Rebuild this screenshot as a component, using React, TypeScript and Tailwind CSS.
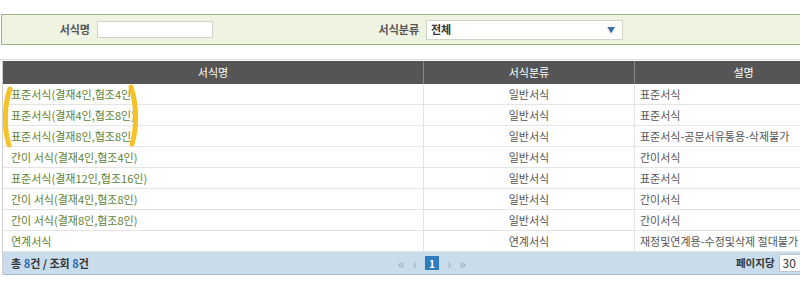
const rows = [
  {name: '표준서식(결재4인,협조4인)', type: '일반서식', desc: '표준서식'},
  {name: '표준서식(결재4인,협조8인)', type: '일반서식', desc: '표준서식'},
  {name: '표준서식(결재8인,협조8인)', type: '일반서식', desc: '표준서식-공문서유통용-삭제불가'},
  {name: '간이 서식(결재4인,협조4인)', type: '일반서식', desc: '간이서식'},
  {name: '표준서식(결재12인,협조16인)', type: '일반서식', desc: '표준서식'},
  {name: '간이 서식(결재4인,협조8인)', type: '일반서식', desc: '간이서식'},
  {name: '간이 서식(결재8인,협조8인)', type: '일반서식', desc: '간이서식'},
  {name: '연계서식', type: '연계서식', desc: '재정및연계용-수정및삭제 절대불가'},
]

export default function App() {
  return (
    <div
      className="relative w-[800px] h-[283px] overflow-hidden bg-white text-[11px]"
      style={{fontFamily: '"Noto Sans CJK KR", "Noto Sans", sans-serif'}}
    >
      {/* search box */}
      <div className="mt-[14px] ml-[1px] w-[850px] h-[31px] border border-[#9db884] bg-[#eef3e2] flex items-center">
        <span className="w-[88px] text-right text-[#555] font-bold">서식명</span>
        <input className="ml-[7px] w-[116px] h-[17px] bg-white border border-[#cfd6c6]" />
        <span className="ml-[164px] w-[42px] text-right text-[#555] font-bold">서식분류</span>
        <div className="ml-[7px] w-[197px] h-[20px] bg-white border border-[#cfd6c6] flex items-center justify-between px-[4px]">
          <span className="text-[#333] font-bold">전체</span>
          <span className="text-[#3a6fa8] text-[8px] mr-[3px]">▼</span>
        </div>
      </div>

      {/* table */}
      <div className="mt-[14px] border-t border-[#dcdcdc] pt-[1px] w-[852px]">
        <div className="ml-[2px] border-l border-[#cfcfcf]">
          <div className="flex h-[23px] bg-[#555555] text-white items-center">
            <div className="w-[420px] text-center">서식명</div>
            <div className="w-[211px] h-full flex items-center justify-center border-l border-[#888]">서식분류</div>
            <div className="flex-1 h-full flex items-center justify-center border-l border-[#888]">설명</div>
          </div>
          {rows.map((r, i) => (
            <div key={i} className="flex h-[21px] items-center border-b border-[#e4e4e4]">
              <div className="w-[420px] pl-[8px] text-[#5f7f2f]">{r.name}</div>
              <div className="w-[211px] h-full flex items-center justify-center border-l border-[#e4e4e4] text-[#555]">{r.type}</div>
              <div className="flex-1 h-full flex items-center pl-[5px] border-l border-[#e4e4e4] text-[#555]">{r.desc}</div>
            </div>
          ))}
          <div className="flex h-[23px] items-center bg-[#c9dcec] border-b border-[#aab9c6]">
            <div className="w-[395px] pl-[8px] font-bold text-[#333]">
              총 <span className="text-[#2a6eb0]">8</span>건 / 조회 <span className="text-[#2a6eb0]">8</span>건
            </div>
            <div className="flex items-center gap-[8px] text-[#9aaabb] text-[14px]">
              <span>«</span>
              <span>‹</span>
              <span className="w-[14px] h-[14px] bg-[#2e7bbf] text-white text-[10px] font-bold flex items-center justify-center">1</span>
              <span>›</span>
              <span>»</span>
            </div>
            <div className="ml-[270px] font-bold text-[#333] text-[10.5px]">페이지당</div>
            <div className="ml-[4px] w-[40px] h-[18px] bg-white border border-[#b9c6d1] flex items-center pl-[3px] text-[#333] text-[12px]">30</div>
          </div>
        </div>
      </div>

      {/* yellow highlight marks */}
      <svg className="absolute left-0 top-0 pointer-events-none" width="800" height="283">
        <path d="M10 89 C4 105 4 130 9 145" stroke="#f5c228" strokeWidth="5" fill="none" strokeLinecap="round" />
        <path d="M131 87 C137 105 137 128 132 144" stroke="#f5c228" strokeWidth="5" fill="none" strokeLinecap="round" />
      </svg>
    </div>
  )
}
